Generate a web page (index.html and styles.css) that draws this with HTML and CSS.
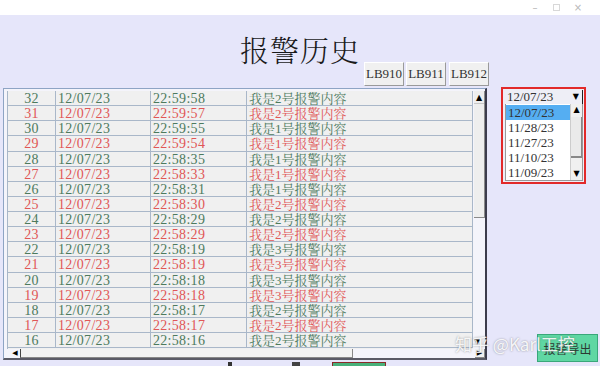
FILE: index.html
```html
<!DOCTYPE html>
<html lang="zh-CN">
<head>
  <meta charset="UTF-8" />
  <meta name="viewport" content="width=device-width, initial-scale=1" />
  <title>报警历史</title>
  <link rel="stylesheet" href="styles.css">
</head>
<body>
  <div class="titlebar">
    <span class="ctl">&#8211;</span>
    <span class="ctl box"></span>
    <span class="ctl">&#215;</span>
  </div>

  <div class="screen">
    <div class="header">
      <h1>报警历史</h1>
      <div class="tabs">
        <button class="tab">LB910</button>
        <button class="tab">LB911</button>
        <button class="tab">LB912</button>
      </div>
    </div>

    <div class="body">
      <div class="frame">
        <div class="inner">
          <div class="rows">
            <div class="row ok"><span class="no">32</span><span>12/07/23</span><span>22:59:58</span><span class="msg">我是2号报警内容</span></div>
            <div class="row bad"><span class="no">31</span><span>12/07/23</span><span>22:59:57</span><span class="msg">我是2号报警内容</span></div>
            <div class="row ok"><span class="no">30</span><span>12/07/23</span><span>22:59:55</span><span class="msg">我是1号报警内容</span></div>
            <div class="row bad"><span class="no">29</span><span>12/07/23</span><span>22:59:54</span><span class="msg">我是1号报警内容</span></div>
            <div class="row ok"><span class="no">28</span><span>12/07/23</span><span>22:58:35</span><span class="msg">我是1号报警内容</span></div>
            <div class="row bad"><span class="no">27</span><span>12/07/23</span><span>22:58:33</span><span class="msg">我是1号报警内容</span></div>
            <div class="row ok"><span class="no">26</span><span>12/07/23</span><span>22:58:31</span><span class="msg">我是1号报警内容</span></div>
            <div class="row bad"><span class="no">25</span><span>12/07/23</span><span>22:58:30</span><span class="msg">我是2号报警内容</span></div>
            <div class="row ok"><span class="no">24</span><span>12/07/23</span><span>22:58:29</span><span class="msg">我是2号报警内容</span></div>
            <div class="row bad"><span class="no">23</span><span>12/07/23</span><span>22:58:29</span><span class="msg">我是2号报警内容</span></div>
            <div class="row ok"><span class="no">22</span><span>12/07/23</span><span>22:58:19</span><span class="msg">我是3号报警内容</span></div>
            <div class="row bad"><span class="no">21</span><span>12/07/23</span><span>22:58:19</span><span class="msg">我是3号报警内容</span></div>
            <div class="row ok"><span class="no">20</span><span>12/07/23</span><span>22:58:18</span><span class="msg">我是3号报警内容</span></div>
            <div class="row bad"><span class="no">19</span><span>12/07/23</span><span>22:58:18</span><span class="msg">我是3号报警内容</span></div>
            <div class="row ok"><span class="no">18</span><span>12/07/23</span><span>22:58:17</span><span class="msg">我是2号报警内容</span></div>
            <div class="row bad"><span class="no">17</span><span>12/07/23</span><span>22:58:17</span><span class="msg">我是2号报警内容</span></div>
            <div class="row ok"><span class="no">16</span><span>12/07/23</span><span>22:58:16</span><span class="msg">我是2号报警内容</span></div>
          </div>
          <div class="vscroll">
            <span class="arrow">&#9650;</span>
          </div>
        </div>
        <div class="hscroll">
          <span class="harrow">&#9664;</span>
          <span class="thumb"></span>
          <span class="spacer"></span>
          <span class="harrow right">&#9654;</span>
        </div>
        <span class="down-mark">&#9660;</span>
      </div>

      <div class="side">
        <div class="picker">
          <div class="combo">
            <span>12/07/23</span>
            <span class="caret">&#9660;</span>
          </div>
          <div class="list">
            <ul class="items">
              <li class="sel">12/07/23</li>
              <li>11/28/23</li>
              <li>11/27/23</li>
              <li>11/10/23</li>
              <li>11/09/23</li>
            </ul>
            <div class="lscroll">
              <span class="larrow">&#9650;</span>
              <span class="lthumb"></span>
              <span class="larrow">&#9660;</span>
            </div>
          </div>
        </div>
        <button class="export">报警导出</button>
      </div>
    </div>

    <div class="under">
      <span class="u1"></span>
      <span class="u2"></span>
      <span class="u3"></span>
    </div>

    <div class="watermark">知乎 @Karl工控</div>
  </div>
</body>
</html>
```

FILE: styles.css
```css
* {
  box-sizing: border-box;
}
html, body {
  margin: 0;
  padding: 0;
  height: 366px;
  overflow: hidden;
}
body {
  font-family: 'Liberation Serif', 'Noto Serif CJK SC', 'Noto Sans CJK SC', serif;
  background: #e6e6fa;
  color: #333;
}

/* Window title bar */
.titlebar {
  height: 15px;
  background: #fff;
  display: flex;
  justify-content: flex-end;
  align-items: center;
  gap: 10px;
  padding-right: 16px;
  color: #b8b8b8;
  font-family: 'DejaVu Sans', sans-serif;
  font-size: 10px;
}
.ctl {
  width: 12px;
  text-align: center;
  line-height: 10px;
}
.ctl.box {
  width: 7px;
  height: 7px;
  margin: 0 2px;
  border: 1px solid #d8d8d8;
}

.screen {
  position: relative;
  height: 351px;
}

/* Header */
.header {
  height: 73px;
}
h1 {
  margin: 0;
  height: 47px;
  padding-top: 20px;
  text-align: center;
  font-family: 'Noto Serif CJK SC', 'Noto Sans CJK SC', serif;
  font-weight: 300;
  font-size: 29px;
  line-height: 30px;
  letter-spacing: 1px;
  color: #1a1a1a;
}
.tabs {
  display: flex;
  justify-content: flex-end;
  gap: 2px;
  padding-right: 111px;
}
.tab {
  width: 40px;
  height: 24px;
  padding: 0;
  background: #f0f0f0;
  border: 1px solid;
  border-color: #fff #9a9a9a #9a9a9a #fff;
  font-family: 'Liberation Serif', serif;
  font-size: 13px;
  color: #333;
}
.tab + .tab + .tab {
  margin-left: 1px;
}

/* Table area */
.body {
  display: grid;
  grid-template-columns: 484px 85px;
  column-gap: 14px;
  padding-left: 3px;
  height: 272px;
}
.frame {
  position: relative;
  display: flex;
  flex-direction: column;
  background: #f4f4fb;
  border: 1px solid #8ea4c4;
  border-right: 2px solid #3c3c4c;
  border-bottom: 2px solid #5a5a66;
  padding: 2px 0 0 3px;
}
.inner {
  display: flex;
  flex: 1;
}
.rows {
  width: 466px;
  border-left: 1px solid #a8b6c8;
  display: grid;
  grid-auto-rows: 15.125px;
  background: #f0f0f0;
}
.row {
  display: grid;
  grid-template-columns: 48px 95px 96px 226px;
  border-bottom: 1px solid #a9b7c9;
  font-size: 14px;
  line-height: 15px;
}
.row span {
  padding-left: 2px;
  border-right: 1px solid #a9b7c9;
  white-space: nowrap;
  overflow: hidden;
  letter-spacing: 0.3px;
}
.row .no {
  padding-left: 0;
  text-align: center;
}
.row .msg {
  font-size: 13px;
  letter-spacing: 0;
}
.row.ok {
  color: #4d7a5e;
}
.row.bad {
  color: #e05656;
}

.vscroll {
  width: 11px;
  height: 127px;
  margin-left: 1px;
  background: #eeeeee;
  border-right: 1px solid #8a8a8a;
  border-bottom: 1px solid #8a8a8a;
}
.arrow {
  display: block;
  height: 13px;
  border-bottom: 1px solid #c8c8c8;
  text-align: center;
  font-family: 'DejaVu Sans', sans-serif;
  font-size: 8px;
  line-height: 13px;
  color: #000;
}

.hscroll {
  display: flex;
  height: 9px;
  margin-left: 3px;
  align-items: stretch;
}
.harrow {
  width: 10px;
  font-family: 'DejaVu Sans', sans-serif;
  font-size: 7px;
  line-height: 9px;
  text-align: center;
  color: #000;
}
.harrow.right {
  background: #f0f0f0;
  border-right: 1px solid #888;
  border-bottom: 1px solid #888;
}
.thumb {
  width: 333px;
  border-left: 1px solid #444;
  border-right: 1px solid #888;
  border-bottom: 1px solid #888;
  background: #f2f2f2;
}
.spacer {
  flex: 1;
}
.down-mark {
  position: absolute;
  right: 5px;
  bottom: 12px;
  font-family: 'DejaVu Sans', sans-serif;
  font-size: 7px;
  color: #000;
}

/* Date picker */
.side {
  display: flex;
  flex-direction: column;
  margin-top: -1px;
}
.picker {
  height: 97px;
  border: 2px solid #e22a2a;
  padding: 1px 1px 1px 2px;
  background: #eeeef6;
}
.combo {
  height: 14px;
  display: flex;
  justify-content: space-between;
  border-right: 1px solid #222;
  padding-left: 2px;
  font-size: 13px;
  line-height: 14px;
  color: #333;
}
.caret {
  font-family: 'DejaVu Sans', sans-serif;
  font-size: 8px;
  padding-right: 3px;
  color: #000;
}
.list {
  display: flex;
  height: 77px;
  background: #fff;
  border: 1px solid #999;
  border-top: 0;
}
.items {
  flex: 1;
  margin: 0;
  padding: 1px 0 0 0;
  list-style: none;
  font-size: 13px;
  line-height: 15px;
  color: #333;
}
.items li {
  padding-left: 2px;
}
.items .sel {
  background: #55aef2;
}
.lscroll {
  width: 12px;
  display: flex;
  flex-direction: column;
  background: #f0f0f0;
  border-left: 1px solid #ccc;
}
.larrow {
  height: 12px;
  font-family: 'DejaVu Sans', sans-serif;
  font-size: 8px;
  line-height: 12px;
  text-align: center;
  color: #000;
}
.lthumb {
  flex: 1;
  margin: 1px 0 10px;
  border-bottom: 2px solid #888;
  border-right: 1px solid #888;
  background: #eaeaea;
}

.export {
  margin: auto 0 -2px 36px;
  width: 61px;
  height: 28px;
  padding: 0;
  background: #5fd7a3;
  border: 1px solid #3aa77a;
  font-family: 'Noto Sans CJK SC', sans-serif;
  font-size: 12px;
  color: #2c3a33;
}

/* clipped controls below the grid */
.under {
  display: flex;
  height: 6px;
  padding-top: 2px;
}
.u1 {
  width: 4px;
  margin-left: 228px;
  background: #333;
}
.u2 {
  width: 8px;
  margin-left: 60px;
  background: #444;
}
.u3 {
  width: 54px;
  margin-left: 32px;
  background: #48b07a;
  border: 1px solid #8a2a2a;
  border-bottom: 0;
}

.watermark {
  position: absolute;
  left: 455px;
  top: 316px;
  font-family: 'Noto Sans CJK SC', sans-serif;
  font-size: 17px;
  color: rgba(255, 255, 255, 0.9);
  text-shadow: 0 0 2px rgba(80, 80, 80, 0.6);
  white-space: nowrap;
}
```
